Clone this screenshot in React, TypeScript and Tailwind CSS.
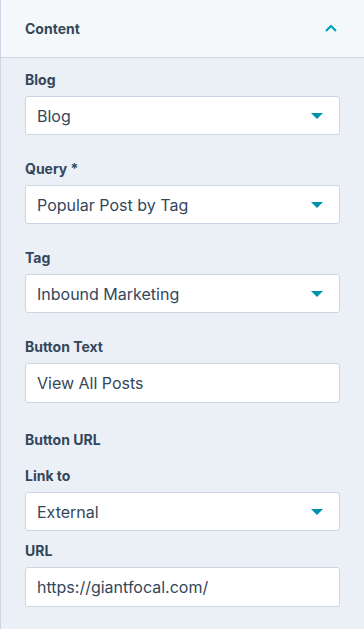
import React from "react";

const Caret: React.FC = () => (
  <svg width="12" height="6" viewBox="0 0 12 6" className="shrink-0">
    <path d="M0 0h12L6 6z" fill="#0091ae" />
  </svg>
);

const SelectField: React.FC<{ value: string }> = ({ value }) => (
  <div className="flex h-[39px] items-center justify-between rounded-[3px] border border-[#cbd6e2] bg-white pl-[11px] pr-4">
    <span className="text-base text-[#33475b]">{value}</span>
    <Caret />
  </div>
);

const TextField: React.FC<{ value: string }> = ({ value }) => (
  <div className="flex h-10 items-center rounded-[3px] border border-[#cbd6e2] bg-white pl-[11px]">
    <span className="text-base text-[#33475b]">{value}</span>
  </div>
);

const Label: React.FC<{ children: React.ReactNode }> = ({ children }) => (
  <div className="mb-[6px] text-sm leading-5 font-bold text-[#33475b]">{children}</div>
);

export default function App() {
  return (
    <div
      className="h-[629px] w-[364px] border-l border-[#cbd6e2] bg-[#eaf0f6]"
      style={{ fontFamily: "Inter, 'Liberation Sans', sans-serif" }}
    >
      {/* header */}
      <div className="flex h-[58px] items-center justify-between border-b border-[#cbd6e2] bg-[#f5f8fa] pl-6 pr-[27px]">
        <span className="text-sm font-bold text-[#33475b]">Content</span>
        <svg width="12" height="7" viewBox="0 0 12 7">
          <path d="M1 6l5-5 5 5" fill="none" stroke="#00a4bd" strokeWidth="2.2" />
        </svg>
      </div>

      <div className="pl-6 pr-6 pt-3">
        <Label>Blog</Label>
        <SelectField value="Blog" />

        <div className="mt-6">
          <Label>Query *</Label>
          <SelectField value="Popular Post by Tag" />
        </div>

        <div className="mt-6">
          <Label>Tag</Label>
          <SelectField value="Inbound Marketing" />
        </div>

        <div className="mt-6">
          <Label>Button Text</Label>
          <TextField value="View All Posts" />
        </div>

        <div className="mt-[27px]">
          <div className="text-sm leading-5 font-bold text-[#33475b]">Button URL</div>
          <div className="mt-4">
            <Label>Link to</Label>
            <SelectField value="External" />
          </div>
          <div className="mt-[10px]">
            <Label>URL</Label>
            <TextField value="https://giantfocal.com/" />
          </div>
        </div>
      </div>
    </div>
  );
}
